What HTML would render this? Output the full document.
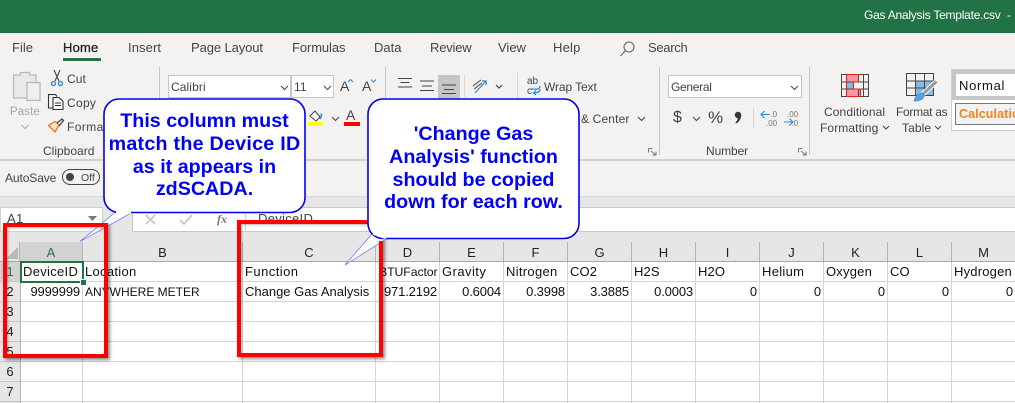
<!DOCTYPE html>
<html><head><meta charset="utf-8"><style>
html,body{margin:0;padding:0}
body{width:1015px;height:403px;overflow:hidden;position:relative;background:#fff;font-family:"Liberation Sans",sans-serif}
.t{position:absolute;white-space:nowrap;font-size:12px;line-height:16px;color:#444;letter-spacing:.1px}
.m{font-size:13px!important;letter-spacing:0}
.g{position:absolute;white-space:nowrap;font-size:13px;line-height:20px;color:#111;letter-spacing:.45px}
.r{text-align:right;letter-spacing:-.15px}
.h{position:absolute;top:242px;height:19px;line-height:21px;font-size:13px;text-align:center;color:#222;background:#e6e6e6;border-right:1px solid #b4b4b4;box-sizing:content-box}
.n{position:absolute;left:0;width:20px;height:19px;line-height:20px;font-size:13px;text-align:center;color:#222;background:#e6e6e6;border-bottom:1px solid #c8c8c8}
.b{position:absolute;background:#fff;border:1px solid #c6c6c6;box-sizing:border-box}
.s{position:absolute;background:#c8c6c4;width:1px}
.c{position:absolute;font-weight:bold;color:#0000f5;font-size:19.7px;line-height:22.8px;text-align:center;white-space:nowrap}
.k{position:absolute;background:#f00}
</style></head><body>
<div style="position:absolute;left:0;top:0;width:1015px;height:33px;background:#217346"></div>
<div class="t" style="left:864px;top:7px;color:#fff;font-size:12px;letter-spacing:-.24px">Gas Analysis Template.csv</div>
<div class="t" style="left:1007px;top:7px;color:#fff;font-size:12px">-</div>
<div style="position:absolute;left:0;top:33px;width:1015px;height:163px;background:#f3f2f1"></div>
<div style="position:absolute;left:0;top:159px;width:1015px;height:2px;background:#d2d0ce"></div>

<div class="t m" style="left:12px;top:40px">File</div>
<div class="t m" style="left:63px;top:40px;color:#222;-webkit-text-stroke:.3px #222;letter-spacing:.2px">Home</div>
<div style="position:absolute;left:63px;top:58px;width:38px;height:3px;background:#217346"></div>
<div class="t m" style="left:128px;top:40px;letter-spacing:.1px">Insert</div>
<div class="t m" style="left:191px;top:40px;letter-spacing:-.1px">Page Layout</div>
<div class="t m" style="left:292px;top:40px;letter-spacing:-.1px">Formulas</div>
<div class="t m" style="left:374px;top:40px">Data</div>
<div class="t m" style="left:430px;top:40px;letter-spacing:-.2px">Review</div>
<div class="t m" style="left:498px;top:40px">View</div>
<div class="t m" style="left:553px;top:40px;letter-spacing:.2px">Help</div>
<svg style="position:absolute;left:619px;top:40px" width="17" height="17" fill="none" stroke="#666" stroke-width="1.1"><circle cx="10" cy="7" r="5"/><path d="M6.500 10.500L1.500 16"/></svg>
<div class="t m" style="left:648px;top:40px;letter-spacing:-.3px">Search</div>

<!-- separators -->
<div class="s" style="left:159px;top:67px;height:90px"></div>
<div class="s" style="left:385px;top:67px;height:88px"></div>
<div class="s" style="left:659px;top:67px;height:88px"></div>
<div class="s" style="left:809px;top:67px;height:88px"></div>
<div class="s" style="left:464px;top:75px;height:22px;background:#d8d6d4"></div>
<div class="s" style="left:517px;top:73px;height:26px;background:#d8d6d4"></div>
<div class="s" style="left:753px;top:108px;height:21px;background:#d8d6d4"></div>

<!-- clipboard -->
<svg style="position:absolute;left:12px;top:70px" width="30" height="32" fill="none" stroke="#b8b8b8" stroke-width="1.3"><path d="M1.500 5h7V2.500h9V5h6.500v23H1.500z" fill="#e9e9e9"/><rect x="15" y="12.500" width="13" height="18" fill="#efefef"/></svg>
<div class="t" style="left:10px;top:104px;color:#a6a6a6;font-size:11.500px;letter-spacing:.1px">Paste</div>
<svg style="position:absolute;left:20px;top:124px" width="10" height="6" fill="none" stroke="#aaa"><path d="M1.500 1l3.500 3.500L8.500 1"/></svg>
<svg style="position:absolute;left:50px;top:69px" width="14" height="18" fill="none" stroke="#444" stroke-width="1.1"><path d="M4 1l5 11M10 1L5 12"/><circle cx="3.500" cy="14.500" r="2" stroke="#2b88d8" stroke-width="1.3"/><circle cx="10.500" cy="14.500" r="2" stroke="#2b88d8" stroke-width="1.3"/></svg>
<div class="t" style="left:67px;top:71px">Cut</div>
<svg style="position:absolute;left:47px;top:93px" width="18" height="18" fill="none" stroke="#333" stroke-width="1.100"><path d="M6 15H1.500V1.500H8.500L10 3.500"/><path d="M6 4.500H12L16 8.500V16.500H6z" fill="#fff"/><path d="M8 10h6M8 12.500h6"/></svg>
<div class="t" style="left:67px;top:95px;letter-spacing:.3px">Copy</div>
<svg style="position:absolute;left:47px;top:117px" width="18" height="18" fill="none" stroke-width="1.300"><path d="M1.500 8.500L8 15l4-7-4-3.500z" fill="#fbe3cc" stroke="#e8791a"/><path d="M10 6l5-4 1.500 1.500L12 9" stroke="#444"/></svg>
<div class="t" style="left:67px;top:119px;letter-spacing:.4px">Format</div>
<div class="t" style="left:43px;top:143px;letter-spacing:0">Clipboard</div>

<!-- font -->
<div class="b" style="left:168px;top:75px;width:123px;height:23px"></div>
<div class="t" style="left:171px;top:79px">Calibri</div>
<svg style="position:absolute;left:280px;top:85px" width="9" height="6" fill="none" stroke="#444"><path d="M1 1l3.500 3.500L8 1"/></svg>
<div class="b" style="left:291px;top:75px;width:43px;height:23px"></div>
<div class="t" style="left:294px;top:79px">11</div>
<svg style="position:absolute;left:323px;top:85px" width="9" height="6" fill="none" stroke="#444"><path d="M1 1l3.500 3.500L8 1"/></svg>
<div class="t" style="left:340px;top:78px;font-size:14px">A</div>
<div class="t" style="left:362px;top:78px;font-size:14px">A</div>
<svg style="position:absolute;left:347px;top:78px" width="38" height="6" fill="none" stroke-width="1"><path d="M1 4l2.500-2.500L6 4" stroke="#2b88d8"/><path d="M24 1.500l2.500 2.500L29 1.500" stroke="#2b88d8"/></svg>
<svg style="position:absolute;left:308px;top:109px" width="16" height="17" fill="none"><path d="M2 7l5-5 5 6-4 4z" stroke="#444" fill="#fff"/><path d="M12 10c2-4 2-5 .500-5" stroke="#2b88d8" stroke-width="1.500"/><rect y="13" x="0" width="15" height="3.500" fill="#ff0" stroke="none"/></svg>
<svg style="position:absolute;left:331px;top:116px" width="9" height="6" fill="none" stroke="#444"><path d="M1 1l3.500 3.500L8 1"/></svg>
<div class="t" style="left:346px;top:107px;font-size:14px">A</div>
<div style="position:absolute;left:344px;top:122px;width:16px;height:4px;background:#f00"></div>

<!-- alignment -->
<svg style="position:absolute;left:398px;top:75px" width="80" height="24" fill="none" stroke="#444" stroke-width="1.100"><rect x="40" y="0" width="22" height="24" fill="#c6c6c6" stroke="none"/><path d="M0 3.500h14M2.500 7.500h9M0 12h14M22 6h14M24 11h10M22 15.500h14M44 10h14M46 14.500h10M44 18.500h14"/></svg>
<svg style="position:absolute;left:471px;top:76px" width="38" height="20" fill="none" stroke-width="1.200"><path d="M2 10l8-6M3 13l8-6" stroke="#666"/><path d="M4 17l11-12M11 5h4v4" stroke="#2b88d8"/><path d="M25 9l3 3 3-3" stroke="#444"/></svg>
<svg style="position:absolute;left:527px;top:78px" width="16" height="17" fill="none"><path d="M4 11c5 0 9 1 9-3M13 11c0 3-3 4-6 4M9 12.500L6.500 15 9 17" stroke="#2b88d8" stroke-width="1.200"/></svg>
<div class="t" style="left:527px;top:77px;font-size:10px;line-height:10px;letter-spacing:0">ab<br>c</div>
<div class="t" style="left:544px;top:79px;letter-spacing:-.1px">Wrap Text</div>
<div class="t" style="left:581px;top:111px;letter-spacing:.15px">&amp; Center</div>
<svg style="position:absolute;left:637px;top:116px" width="9" height="6" fill="none" stroke="#444"><path d="M1 1l3.500 3.500L8 1"/></svg>
<svg style="position:absolute;left:648px;top:148px" width="9" height="8" fill="none" stroke="#777"><path d="M.5.500h4M.5.500v4M3 3l5 4M8 3.500V7H4.500"/></svg>

<!-- number -->
<div class="b" style="left:668px;top:75px;width:134px;height:23px"></div>
<div class="t" style="left:671px;top:79px;letter-spacing:-.3px">General</div>
<svg style="position:absolute;left:790px;top:85px" width="9" height="6" fill="none" stroke="#444"><path d="M1 1l3.500 3.500L8 1"/></svg>
<div class="t" style="left:673px;top:108px;font-size:16px;line-height:20px">$</div>
<svg style="position:absolute;left:692px;top:116px" width="9" height="6" fill="none" stroke="#444"><path d="M1 1l3.500 3.500L8 1"/></svg>
<div class="t" style="left:708px;top:108px;font-size:17px;line-height:20px;letter-spacing:0">%</div>
<svg style="position:absolute;left:733px;top:110px" width="10" height="15"><circle cx="5" cy="5" r="3.200" fill="#333"/><path d="M8.200 5C8.200 9 6 12 3 13.500L2.500 12.500C4 11 5 9 5 7z" fill="#333"/></svg>
<div class="t" style="left:766px;top:110px;font-size:8px;line-height:9px;color:#777;letter-spacing:0;text-align:right">.0<br>.00</div>
<div class="t" style="left:787px;top:110px;font-size:8px;line-height:9px;color:#777;letter-spacing:0;text-align:right">.00<br>.0</div>
<svg style="position:absolute;left:760px;top:110px" width="40" height="16" fill="none" stroke="#2b88d8" stroke-width="1.100"><path d="M10 4.500H1M4.500 1L1 4.500 4.500 8M24 12h9M29.500 8.500L33 12l-3.500 3.500"/></svg>
<div class="t" style="left:706px;top:143px;letter-spacing:-.1px">Number</div>
<svg style="position:absolute;left:798px;top:148px" width="9" height="8" fill="none" stroke="#777"><path d="M.5.500h4M.5.500v4M3 3l5 4M8 3.500V7H4.500"/></svg>

<!-- conditional -->
<svg style="position:absolute;left:841px;top:74px" width="29" height="24" fill="none" stroke="#444" stroke-width="1"><rect x="5.500" y=".5" width="12" height="7.500" fill="#f4989d" stroke="none"/><rect x="5.500" y="8" width="7" height="7" fill="#83bbe6" stroke="none"/><rect x="5.500" y="15" width="14" height="7.500" fill="#f4989d" stroke="none"/><path d="M.5.500h27v22H.5zM.5 8h27M.5 15h27M5.500.500v22M17.500.500v7.500M22.500.500v22M17.500 15v7.500"/><path d="M5.500.500h12V8h-5v7h7v7.500h-14z" stroke="#d22" stroke-width="1.100"/></svg>
<div class="t" style="left:824px;top:104px;letter-spacing:.1px">Conditional</div>
<div class="t" style="left:820px;top:120px;letter-spacing:.1px">Formatting</div>
<svg style="position:absolute;left:882px;top:125px" width="8" height="6" fill="none" stroke="#444"><path d="M1 1l3 3 3-3"/></svg>
<svg style="position:absolute;left:906px;top:73px" width="34" height="30" fill="none" stroke="#444"><rect x="9.500" y="8" width="18" height="14.500" fill="#83bbe6" stroke="none"/><path d="M.5.500h27v22H.5zM.5 8h27M.5 15h27M9.500.500v22M18.500.500v22"/><path d="M30.500 8.500L16 22" stroke="#fff" stroke-width="5"/><path d="M30.500 8.500L16 22" stroke="#999" stroke-width="3"/><path d="M8 28c1-5 5-8 8-8l2.500 2.500c-1 4-6 6-10.500 5.500z" fill="#5c9fd8" stroke="#3a86c8" stroke-width=".6"/></svg>
<div class="t" style="left:896px;top:104px;letter-spacing:-.3px">Format as</div>
<div class="t" style="left:902px;top:120px;letter-spacing:.1px">Table</div>
<svg style="position:absolute;left:934px;top:125px" width="8" height="6" fill="none" stroke="#444"><path d="M1 1l3 3 3-3"/></svg>
<div style="position:absolute;left:951px;top:69px;width:64px;height:62px;background:#fff;border:1px solid #d2d0ce;border-right:0;box-sizing:border-box"></div>
<div style="position:absolute;left:952px;top:70px;width:63px;height:30px;box-sizing:border-box;border:4px solid #c6c6c6;border-right:0;background:#fff"></div>
<div class="t" style="left:959px;top:78px;font-size:13px;color:#111;letter-spacing:.7px">Normal</div>
<div style="position:absolute;left:955px;top:103px;width:60px;height:22px;box-sizing:border-box;border:1px solid #777;border-right:0;background:#f2f2f2"></div>
<div class="t" style="left:959px;top:106px;color:#f7811c;font-weight:bold;font-size:12.500px;letter-spacing:.1px">Calculatio</div>

<div class="t" style="left:5px;top:170px;letter-spacing:-.1px">AutoSave</div>
<div style="position:absolute;left:62px;top:169px;width:38px;height:16px;box-sizing:border-box;border:1px solid #444;border-radius:8px"></div>
<div style="position:absolute;left:66px;top:173px;width:8px;height:8px;border-radius:50%;background:#444"></div>
<div class="t" style="left:81px;top:170px;font-size:10.500px;letter-spacing:0">Off</div>

<!-- formula area -->
<div style="position:absolute;left:0;top:196px;width:1015px;height:46px;background:#e6e6e6"></div>
<div style="position:absolute;left:0;top:196px;width:1015px;height:1px;background:#dadada"></div>
<div style="position:absolute;left:0;top:207px;width:103px;height:25px;background:#fff;border:1px solid #d0d0d0;box-sizing:border-box"></div>
<div class="t" style="left:7px;top:211px;font-size:13px;letter-spacing:.3px">A1</div>
<svg style="position:absolute;left:88px;top:216px" width="10" height="6"><path d="M0 0h9L4.500 5z" fill="#777"/></svg>
<div style="position:absolute;left:132px;top:207px;width:883px;height:25px;background:#fff;border:1px solid #c8c8c8;border-right:0;box-sizing:border-box"></div>
<div style="position:absolute;left:245px;top:207px;width:1px;height:25px;background:#d0d0d0"></div>
<svg style="position:absolute;left:143px;top:212px" width="90" height="16" fill="none" stroke="#c8c8c8" stroke-width="1.800"><path d="M3 3l9 9M12 3l-9 9M37 8l4 4 8-9"/></svg>
<div class="t" style="left:217px;top:211px;font-family:'Liberation Serif',serif;font-style:italic;font-weight:bold;color:#777;font-size:12px;letter-spacing:0">fx</div>
<div class="t" style="left:258px;top:211px;font-size:13px;letter-spacing:.3px">DeviceID</div>

<!-- column headers -->
<div style="position:absolute;left:0;top:242px;width:20px;height:20px;background:#e6e6e6;border-right:1px solid #b4b4b4;box-sizing:border-box"></div>
<svg style="position:absolute;left:6px;top:247px" width="12" height="12"><path d="M12 0V12H0z" fill="#b8b8b8"/></svg>
<div class="h" style="left:20px;width:62px;background:#d2d2d2;color:#217346;">A</div>
<div class="h" style="left:83px;width:159px">B</div>
<div class="h" style="left:243px;width:132px">C</div>
<div class="h" style="left:376px;width:63px">D</div>
<div class="h" style="left:440px;width:63px">E</div>
<div class="h" style="left:504px;width:63px">F</div>
<div class="h" style="left:568px;width:63px">G</div>
<div class="h" style="left:632px;width:63px">H</div>
<div class="h" style="left:696px;width:63px">I</div>
<div class="h" style="left:760px;width:63px">J</div>
<div class="h" style="left:824px;width:63px">K</div>
<div class="h" style="left:888px;width:63px">L</div>
<div class="h" style="left:952px;width:63px">M</div>
<div style="position:absolute;left:0;top:261px;width:1015px;height:1px;background:#a8a8a8"></div>

<!-- grid -->
<svg style="position:absolute;left:0;top:262px" width="1015" height="141" stroke="#d4d4d4" stroke-width="1" shape-rendering="crispEdges"><path d="M0 19.500H1015M0 39.500H1015M0 59.500H1015M0 79.500H1015M0 99.500H1015M0 119.500H1015M0 139.500H1015M82.500 0V141M242.500 0V141M375.500 0V141M439.500 0V141M503.500 0V141M567.500 0V141M631.500 0V141M695.500 0V141M759.500 0V141M823.500 0V141M887.500 0V141M951.500 0V141"/></svg>
<div style="position:absolute;left:0;top:262px;width:20px;height:141px;background:#e6e6e6;border-right:1px solid #b4b4b4;box-sizing:content-box"></div>
<div class="n" style="top:262px;background:#d2d2d2;color:#217346">1</div>
<div class="n" style="top:282px">2</div>
<div class="n" style="top:302px">3</div>
<div class="n" style="top:322px">4</div>
<div class="n" style="top:342px">5</div>
<div class="n" style="top:362px">6</div>
<div class="n" style="top:382px">7</div>

<div class="g" style="left:23px;top:262px;letter-spacing:.3px">DeviceID</div>
<div class="g" style="left:85px;top:262px;letter-spacing:.3px">Location</div>
<div class="g" style="left:245px;top:262px">Function</div>
<div class="g" style="left:379px;top:262px;width:60px;overflow:hidden;font-size:12.300px;letter-spacing:-.1px">BTUFactor</div>
<div class="g" style="left:442px;top:262px">Gravity</div>
<div class="g" style="left:506px;top:262px;letter-spacing:.3px">Nitrogen</div>
<div class="g" style="left:570px;top:262px;letter-spacing:.1px">CO2</div>
<div class="g" style="left:634px;top:262px;letter-spacing:.1px">H2S</div>
<div class="g" style="left:698px;top:262px;letter-spacing:.1px">H2O</div>
<div class="g" style="left:762px;top:262px;letter-spacing:.3px">Helium</div>
<div class="g" style="left:826px;top:262px;letter-spacing:.2px">Oxygen</div>
<div class="g" style="left:890px;top:262px;letter-spacing:.1px">CO</div>
<div class="g" style="left:954px;top:262px;letter-spacing:.2px">Hydrogen</div>

<div class="g r" style="left:20px;width:60px;top:282px">9999999</div>
<div class="g" style="left:85px;top:282px;font-size:12px;letter-spacing:0">ANYWHERE METER</div>
<div class="g" style="left:245px;top:282px;letter-spacing:0">Change Gas Analysis</div>
<div class="g r" style="left:376px;width:61px;top:282px">971.2192</div>
<div class="g r" style="left:440px;width:61px;top:282px">0.6004</div>
<div class="g r" style="left:504px;width:61px;top:282px">0.3998</div>
<div class="g r" style="left:568px;width:61px;top:282px">3.3885</div>
<div class="g r" style="left:632px;width:61px;top:282px">0.0003</div>
<div class="g r" style="left:696px;width:61px;top:282px">0</div>
<div class="g r" style="left:760px;width:61px;top:282px">0</div>
<div class="g r" style="left:824px;width:61px;top:282px">0</div>
<div class="g r" style="left:888px;width:61px;top:282px">0</div>
<div class="g r" style="left:952px;width:61px;top:282px">0</div>

<div style="position:absolute;left:20px;top:261px;width:64px;height:22px;box-sizing:border-box;border:2px solid #217346"></div>
<div style="position:absolute;left:80px;top:279px;width:5px;height:5px;background:#217346;border:1px solid #fff"></div>

<!-- callout 1 -->
<svg style="position:absolute;left:0;top:0" width="1015" height="403"><path d="M132 212.500L80 241.500 115 212.500z" fill="#fff" stroke="#5a5af5" stroke-width=".6"/><rect x="104" y="99" width="201" height="113.500" rx="15" fill="#fff" stroke="#0000f0" stroke-width="1.600"/><path d="M116 212.500H131" stroke="#fff" stroke-width="2.500"/></svg>
<div class="c" style="left:104px;width:201px;top:110px">This column must<br><span style="letter-spacing:.25px">match the Device ID</span><br>as it appears in<br>zdSCADA.</div>

<!-- red boxes -->
<div style="position:absolute;left:3px;top:223px;width:105px;height:135px;box-sizing:border-box;border:4px solid #f00;box-shadow:2px 2px 3px rgba(0,0,0,.45),inset 1px 1px 2px rgba(0,0,0,.3)"></div>
<div style="position:absolute;left:237px;top:220px;width:146px;height:137px;box-sizing:border-box;border:4px solid #f00;box-shadow:2px 2px 3px rgba(0,0,0,.45),inset 1px 1px 2px rgba(0,0,0,.3)"></div>

<!-- callout 2 -->
<svg style="position:absolute;left:0;top:0" width="1015" height="403"><path d="M387 238.500L345 265 372 234z" fill="#fff" stroke="#5a5af5" stroke-width=".6"/><rect x="368" y="99" width="211" height="139.500" rx="15" fill="#fff" stroke="#0000f0" stroke-width="1.600"/><path d="M373 233.500L386 238" stroke="#fff" stroke-width="2.500"/></svg>
<div class="k" style="left:379px;top:241px;width:4px;height:116px"></div>
<div class="c" style="left:368px;width:211px;top:123px">'Change Gas<br>Analysis' function<br>should be copied<br>down for each row.</div>
</body></html>
